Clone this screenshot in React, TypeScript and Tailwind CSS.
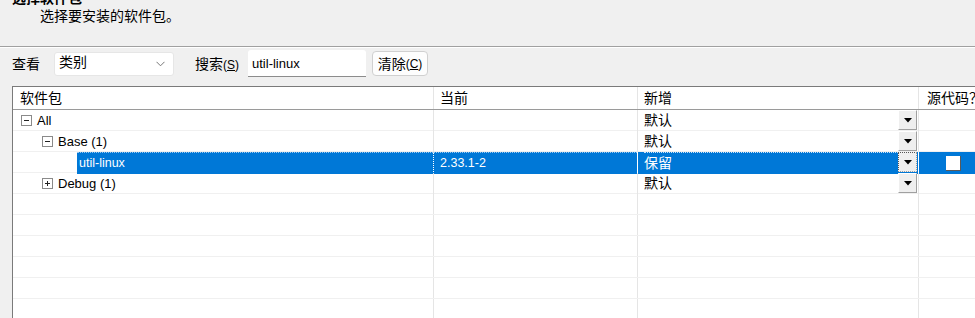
import React from 'react'

const FONT = '"Liberation Sans", "Noto Sans CJK SC", sans-serif'

function Expander({ open }: { open: boolean }) {
  return (
    <svg width="11" height="11" viewBox="0 0 11 11" className="shrink-0">
      <rect x="0.5" y="0.5" width="10" height="10" fill="#fff" stroke="#8a8a8a" />
      <path d="M3 5.5h5" stroke="#222" strokeWidth="1" />
      {!open && <path d="M5.5 3v5" stroke="#222" strokeWidth="1" />}
    </svg>
  )
}

function DropButton({ focused }: { focused?: boolean }) {
  return (
    <div
      className={`w-[19px] h-[20px] bg-[#efefef] border-r border-b border-[#a0a0a0] flex items-center justify-center ${
        focused ? 'border-t border-l border-dotted border-t-[#555] border-l-[#555]' : 'border-t border-l border-t-white border-l-white'
      }`}
    >
      <svg width="8" height="5" viewBox="0 0 8 5">
        <path d="M0 0h8L4 4.5z" fill="#000" />
      </svg>
    </div>
  )
}

type Row = {
  indent: number
  expander?: 'open' | 'closed'
  label: string
  current?: string
  action?: string
  selected?: boolean
}

const rows: Row[] = [
  { indent: 8, expander: 'open', label: 'All', action: '默认' },
  { indent: 29, expander: 'open', label: 'Base (1)', action: '默认' },
  { indent: 64, label: 'util-linux', current: '2.33.1-2', action: '保留', selected: true },
  { indent: 29, expander: 'closed', label: 'Debug (1)', action: '默认' },
]

export default function App() {
  return (
    <div className="w-[975px] h-[318px] overflow-hidden bg-[#f0f0f0] flex flex-col text-black" style={{ fontFamily: FONT }}>
      {/* wizard header */}
      <div className="h-[47px] shrink-0 border-b border-[#a0a0a0] shadow-[0_1px_0_#ffffff]">
        <div className="pl-[12px] mt-[-11px] text-[14px] font-bold leading-[18px]">选择软件包</div>
        <div className="pl-[40px] text-[14px] leading-[18px]">选择要安装的软件包。</div>
      </div>

      {/* toolbar */}
      <div className="flex items-center h-[27px] mt-[3px] pl-[12px] text-[14px] shrink-0">
        <span className="leading-none">查看</span>
        <div className="ml-[14px] w-[120px] h-[24px] bg-white border border-[#e6e6e6] rounded-[3px] flex items-center pl-[4px] pr-[8px]">
          <span className="flex-1 leading-none mt-[-3px]">类别</span>
          <svg width="9" height="6" viewBox="0 0 9 6">
            <path d="M0.5 0.8l4 4 4-4" fill="none" stroke="#777" strokeWidth="1" />
          </svg>
        </div>
        <span className="ml-[21px] leading-none flex items-baseline">
          搜索<span className="text-[12px]">(<span className="underline">S</span>)</span>
        </span>
        <div className="ml-[9px] w-[118px] h-[27px] bg-white border-b border-[#8c8c8c] rounded-t-[3px] flex items-start pl-[4px] pt-[4px] text-[13px]">
          util-linux
        </div>
        <div className="ml-[6px] w-[56px] h-[25px] bg-[#fdfdfd] border border-[#d0d0d0] rounded-[4px] flex items-center justify-center leading-none">
          清除<span className="text-[12px]">(<span className="underline">C</span>)</span>
        </div>
      </div>

      {/* package list */}
      <div className="ml-[12px] mt-[9px] flex-1 bg-white border-l border-t border-[#7a7a7a] overflow-hidden">
        <div className="grid grid-cols-[420px_204px_281px_1fr] h-[23px] border-b border-[#9a9a9a] text-[14px]">
          <div className="pl-[7px] flex items-center">软件包</div>
          <div className="pl-[6px] flex items-center border-l border-[#e5e5e5]">当前</div>
          <div className="pl-[6px] flex items-center border-l border-[#e5e5e5]">新增</div>
          <div className="pl-[8px] flex items-center border-l border-[#e5e5e5] whitespace-nowrap overflow-hidden">源代码？</div>
        </div>

        {rows.map(r => (
          <div key={r.label} className="grid grid-cols-[420px_204px_281px_1fr] h-[21px] border-b border-[#f0f0f0] text-[13px]">
            <div className="flex items-center h-full" style={{ paddingLeft: r.indent }}>
              {r.expander && <Expander open={r.expander === 'open'} />}
              {r.selected ? (
                <div className="flex-1 h-full bg-[#0078d7] text-white flex items-center pl-[2px] border-t border-dotted border-[#9cc9f0] text-[12.5px]">
                  {r.label}
                </div>
              ) : (
                <span className="ml-[5px]">{r.label}</span>
              )}
            </div>
            <div
              className={`h-full flex items-center pl-[6px] border-l text-[12.5px] ${
                r.selected ? 'bg-[#0078d7] text-white border-white border-t border-t-[#9cc9f0] border-dotted' : 'border-[#e5e5e5]'
              }`}
            >
              {r.current}
            </div>
            <div
              className={`h-full flex items-start pl-[6px] pr-[1px] border-l text-[14px] ${
                r.selected ? 'bg-[#0078d7] text-white border-white' : 'border-[#e5e5e5]'
              }`}
            >
              <span className={`flex-1 h-full flex items-center ${r.selected ? 'border-t border-dotted border-[#cfe4f7]' : ''}`}>{r.action}</span>
              <DropButton focused={r.selected} />
            </div>
            <div className={`h-full flex items-center border-l ${r.selected ? 'bg-[#0078d7] border-white' : 'border-[#e5e5e5]'}`}>
              {r.selected && <div className="ml-[27px] w-[15px] h-[15px] bg-white border-r border-b border-[#5a5a5a]" />}
            </div>
          </div>
        ))}

        {[0, 1, 2, 3, 4, 5, 6].map(i => (
          <div key={i} className="grid grid-cols-[420px_204px_281px_1fr] h-[21px] border-b border-[#f0f0f0]">
            <div />
            <div className="border-l border-[#e5e5e5]" />
            <div className="border-l border-[#e5e5e5]" />
            <div className="border-l border-[#e5e5e5]" />
          </div>
        ))}
      </div>
    </div>
  )
}
